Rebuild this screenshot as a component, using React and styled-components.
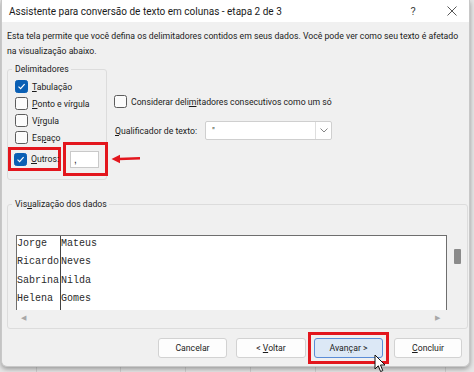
import React from "react";
import styled, { createGlobalStyle } from "styled-components";

const GlobalStyle = createGlobalStyle`
  html, body {
    margin: 0;
    padding: 0;
  }
  body {
    width: 474px;
    height: 372px;
    overflow: hidden;
    background: #e4e4e4;
    font-family: Roboto, "Noto Sans", "Liberation Sans", sans-serif;
    color: #1b1b1b;
  }
`;

const Screen = styled.div`
  width: 474px;
  height: 372px;
  padding-left: 1px;
  box-sizing: border-box;
  background: repeating-linear-gradient(
    90deg,
    #e6e6e6 0,
    #e6e6e6 64px,
    #cfcfcf 64px,
    #cfcfcf 65px
  );
  background-position: 56px 0;
`;

const Dialog = styled.div`
  position: relative;
  width: 469px;
  height: 367px;
  background: #f0f0f0;
  border: 1px solid #c8c8c8;
  border-top: none;
  border-radius: 0 0 6px 6px;
  box-sizing: border-box;
  box-shadow: 0 2px 5px rgba(0, 0, 0, 0.35);
  display: flex;
  flex-direction: column;
`;

const TitleBar = styled.div`
  height: 22px;
  background: #fff;
  display: flex;
  align-items: center;
  padding-left: 7px;
  font-size: 10px;
  color: #1a1a1a;
`;

const TitleText = styled.div`
  flex: 1;
  white-space: nowrap;
`;

const TitleButton = styled.div`
  width: ${(p) => p.$w}px;
  height: 22px;
  display: flex;
  align-items: center;
  justify-content: center;
  font-size: 11px;
  color: #444;
`;

const Body = styled.div`
  flex: 1;
  display: flex;
  flex-direction: column;
  padding: 7px 4px 0 5px;
  font-size: 8.7px;
`;

const Description = styled.p`
  margin: 0;
  line-height: 15px;
  width: 460px;
`;

const TopSection = styled.div`
  display: flex;
  gap: 7px;
  margin-top: 3px;
`;

const Group = styled.fieldset`
  margin: 0;
  padding: ${(p) => p.$pad || "0"};
  width: ${(p) => p.$w}px;
  height: ${(p) => p.$h}px;
  border: 1px solid #dcdcdc;
  border-radius: 3px;
  box-sizing: border-box;
  min-width: 0;
`;

const Legend = styled.legend`
  margin-left: -${(p) => p.$shift || 0}px;
  padding: 0 2px 0 3px;
  line-height: 14px;
  color: #1b1b1b;
`;

const CheckList = styled.div`
  display: flex;
  flex-direction: column;
  margin-top: 2px;
`;

const CheckRow = styled.label`
  display: flex;
  align-items: center;
  gap: 4px;
  height: 17px;
  white-space: nowrap;
`;

const Box = styled.span`
  width: 11px;
  height: 11px;
  border-radius: 2.5px;
  border: 1px solid ${(p) => (p.$checked ? "#0a5fb4" : "#5c5c5c")};
  background: ${(p) => (p.$checked ? "#0a5fb4" : "#fbfbfb")};
  display: flex;
  align-items: center;
  justify-content: center;
  flex-shrink: 0;
`;

const U = styled.span`
  text-decoration: underline;
  text-underline-offset: 1px;
`;

const OtherRow = styled.div`
  display: flex;
  align-items: center;
  height: 24px;
  margin-top: 1px;
  margin-left: -7px;
`;

const Highlight = styled.div`
  border: 3px solid #e3161d;
  box-sizing: border-box;
  display: flex;
  align-items: center;
  justify-content: ${(p) => (p.$center ? "center" : "flex-start")};
  padding: ${(p) => p.$pad || "0"};
  margin-left: ${(p) => p.$ml || 0}px;
  width: ${(p) => (p.$w ? p.$w + "px" : "auto")};
  height: ${(p) => p.$h}px;
  flex-shrink: 0;
`;

const SmallInput = styled.div`
  width: 29px;
  height: 17px;
  background: #fff;
  border: 1px solid #c9c9c9;
  box-sizing: border-box;
  font-family: "Liberation Sans", sans-serif;
  font-size: 10px;
  line-height: 15px;
  padding-left: 3px;
  margin-left: -2px;
`;

const Arrow = styled.svg`
  margin-left: 3px;
  flex-shrink: 0;
`;

const RightCol = styled.div`
  display: flex;
  flex-direction: column;
  padding-top: 31px;
`;

const ComboRow = styled.div`
  display: flex;
  align-items: center;
  margin-top: 11px;
  margin-left: 1px;
  white-space: nowrap;
`;

const ComboLabel = styled.span`
  width: 90px;
`;

const Combo = styled.div`
  width: 127px;
  height: 19px;
  background: #fff;
  border: 1px solid #cfcfcf;
  border-radius: 2px;
  box-sizing: border-box;
  display: flex;
  align-items: center;
`;

const ComboValue = styled.span`
  flex: 1;
  padding-left: 6px;
  color: #333;
`;

const ComboButton = styled.span`
  width: 15px;
  height: 17px;
  border-left: 1px solid #dedede;
  display: flex;
  align-items: center;
  justify-content: center;
`;

const PreviewWrap = styled.div`
  margin-top: 17px;
`;

const PreviewRow = styled.div`
  display: flex;
  margin-top: 24px;
`;

const Grid = styled.div`
  width: 431px;
  height: 75px;
  background: #fff;
  border: 1px solid #6e6e6e;
  border-bottom: none;
  box-sizing: border-box;
  overflow: hidden;
  display: flex;
`;

const Column = styled.div`
  width: ${(p) => p.$w}px;
  border-right: ${(p) => (p.$sep ? "1px solid #444" : "none")};
  display: flex;
  flex-direction: column;
  padding-top: 1px;
  box-sizing: border-box;
`;

const Cell = styled.div`
  height: 20px;
  line-height: 13px;
  font-family: "Liberation Mono", "Courier New", monospace;
  font-size: 10px;
  color: #2a2a2a;
  white-space: nowrap;
`;

const VScroll = styled.div`
  width: 20px;
  display: flex;
  justify-content: center;
  padding-top: 14px;
`;

const Thumb = styled.div`
  width: 7px;
  height: 15px;
  background: #8a8a8a;
  border-radius: 1px;
`;

const HScroll = styled.div`
  width: 431px;
  height: 16px;
  display: flex;
  align-items: center;
  justify-content: space-between;
  padding: 0 7px 0 5px;
  box-sizing: border-box;
  color: #a8a8a8;
  font-size: 7px;
`;

const ButtonBar = styled.div`
  display: flex;
  justify-content: flex-end;
  align-items: center;
  gap: 9px;
  margin-top: 3px;
  padding-right: 3px;
`;

const Button = styled.div`
  width: ${(p) => p.$w || 70}px;
  height: 20px;
  border-radius: 3px;
  border: 1px solid ${(p) => (p.$primary ? "#5a8cd6" : "#d2d2d2")};
  background: ${(p) => (p.$primary ? "#dce8f6" : "#fdfdfd")};
  box-sizing: border-box;
  display: flex;
  align-items: center;
  justify-content: center;
  color: #1b1b1b;
  white-space: pre;
`;

const PrimaryHighlight = styled(Highlight)`
  margin: 0 -4px 0 -7px;
  position: relative;
`;

const Cursor = styled.svg`
  position: absolute;
  left: 63px;
  top: 19px;
`;

const Check = () => (
  <svg width="9" height="9" viewBox="0 0 9 9">
    <path d="M1.5 4.6 L3.6 6.6 L7.6 2.2" fill="none" stroke="#fff" strokeWidth="1.2" />
  </svg>
);

const CheckBox = ({ checked }) => (
  <Box $checked={checked}>{checked && <Check />}</Box>
);

const rows = [
  ["Jorge", "Mateus"],
  ["Ricardo", "Neves"],
  ["Sabrina", "Nilda"],
  ["Helena", "Gomes"],
];

export default function App() {
  return (
    <>
      <GlobalStyle />
      <Screen>
        <Dialog>
          <TitleBar>
            <TitleText>Assistente para conversão de texto em colunas - etapa 2 de 3</TitleText>
            <TitleButton $w={44}>?</TitleButton>
            <TitleButton $w={34}>
              <svg width="10" height="10" viewBox="0 0 10 10">
                <path d="M0.5 0.5 L9.5 9.5 M9.5 0.5 L0.5 9.5" stroke="#444" strokeWidth="0.9" />
              </svg>
            </TitleButton>
          </TitleBar>
          <Body>
            <Description>
              Esta tela permite que você defina os delimitadores contidos em seus dados. Você pode ver como seu texto é afetado na visualização abaixo.
            </Description>

            <TopSection>
              <Group $w={100} $h={118} $pad="0 0 0 7px">
                <Legend $shift={3}>Delimitadores</Legend>
                <CheckList>
                  <CheckRow>
                    <CheckBox checked />
                    <span><U>T</U>abulação</span>
                  </CheckRow>
                  <CheckRow>
                    <CheckBox />
                    <span><U>P</U>onto e vírgula</span>
                  </CheckRow>
                  <CheckRow>
                    <CheckBox />
                    <span>V<U>í</U>rgula</span>
                  </CheckRow>
                  <CheckRow>
                    <CheckBox />
                    <span>Es<U>p</U>aço</span>
                  </CheckRow>
                  <OtherRow>
                    <Highlight $w={53} $h={24} $pad="0 0 0 3px">
                      <CheckRow>
                        <CheckBox checked />
                        <span><U>O</U>utros:</span>
                      </CheckRow>
                    </Highlight>
                    <Highlight $w={45} $h={34} $center $ml={2}>
                      <SmallInput>,</SmallInput>
                    </Highlight>
                    <Arrow width="30" height="10" viewBox="0 0 30 10">
                      <path d="M8 5 L29 4.3" stroke="#e3161d" strokeWidth="2.6" />
                      <path d="M0.5 5 L9 0.8 L9 9.2 Z" fill="#e3161d" />
                    </Arrow>
                  </OtherRow>
                </CheckList>
              </Group>

              <RightCol>
                <CheckRow>
                  <CheckBox />
                  <span>Considerar deli<U>m</U>itadores consecutivos como um só</span>
                </CheckRow>
                <ComboRow>
                  <ComboLabel><U>Q</U>ualificador de texto:</ComboLabel>
                  <Combo>
                    <ComboValue>"</ComboValue>
                    <ComboButton>
                      <svg width="8" height="5" viewBox="0 0 8 5">
                        <path d="M0.5 0.5 L4 4 L7.5 0.5" fill="none" stroke="#777" strokeWidth="0.9" />
                      </svg>
                    </ComboButton>
                  </Combo>
                </ComboRow>
              </RightCol>
            </TopSection>

            <PreviewWrap>
              <Group $w={461} $h={132} $pad="0 0 0 8px">
                <Legend $shift={4}>Vis<U>u</U>alização dos dados</Legend>
                <PreviewRow>
                  <Grid>
                    <Column $w={44} $sep>
                      {rows.map((r) => (
                        <Cell key={r[0]}>{r[0]}</Cell>
                      ))}
                    </Column>
                    <Column $w={200}>
                      {rows.map((r) => (
                        <Cell key={r[1]}>{r[1]}</Cell>
                      ))}
                    </Column>
                  </Grid>
                  <VScroll>
                    <Thumb />
                  </VScroll>
                </PreviewRow>
                <HScroll>
                  <span>◀</span>
                  <span>▶</span>
                </HScroll>
              </Group>
            </PreviewWrap>

            <ButtonBar>
              <Button $w={69}>Cancelar</Button>
              <Button $w={70}><span>&lt; <U>V</U>oltar</span></Button>
              <PrimaryHighlight $w={81} $h={32} $pad="0 0 0 3px">
                <Button $w={69} $primary><span>Avan<U>ç</U>ar &gt;</span></Button>
                <Cursor width="13" height="20" viewBox="0 0 13 20">
                  <path d="M1 1 L1 15 L4.3 11.8 L6.6 17.5 L8.8 16.6 L6.5 11 L11 11 Z" fill="#fff" stroke="#111" strokeWidth="1" strokeLinejoin="round" />
                </Cursor>
              </PrimaryHighlight>
              <Button $w={68}><span><U>C</U>oncluir</span></Button>
            </ButtonBar>
          </Body>
        </Dialog>
      </Screen>
    </>
  );
}
